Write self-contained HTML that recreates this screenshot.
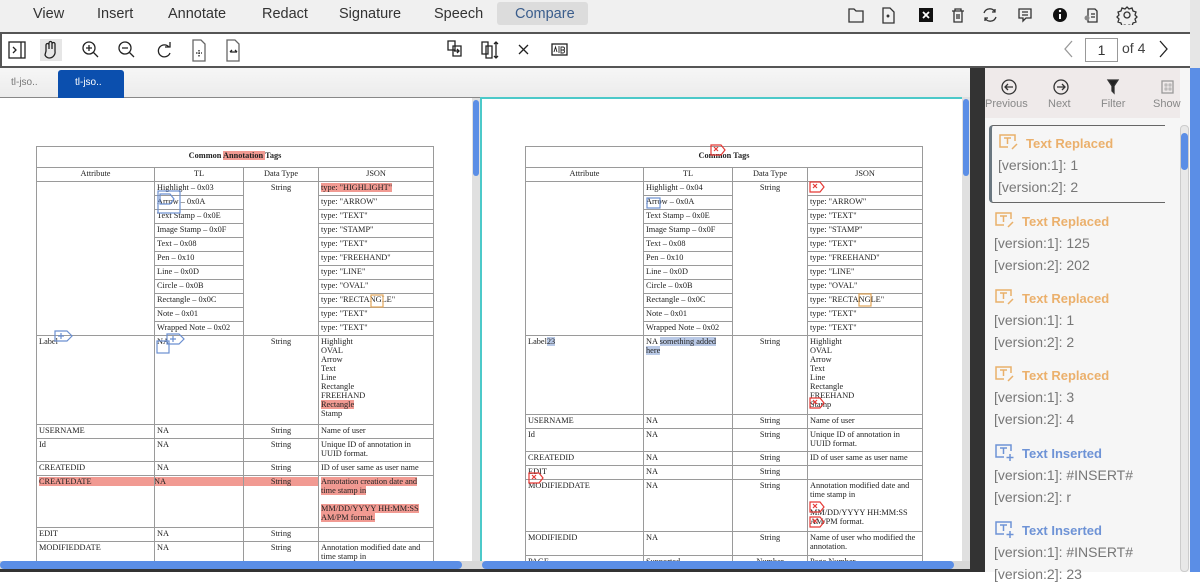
<!DOCTYPE html>
<html><head><meta charset="utf-8">
<style>
*{box-sizing:border-box;margin:0;padding:0}
body{width:1200px;height:572px;overflow:hidden;background:#fff;font-family:"Liberation Sans",sans-serif;position:relative}
.abs{position:absolute}
#menu{left:0;top:0;width:1200px;height:32px;background:#f0f0f0}
#menu span{position:absolute;top:6px;font-size:14.5px;color:#333}
#tb{left:0;top:32px;width:1200px;height:36px;background:#fff;border:2px solid #555}
#tabs{left:0;top:68px;width:985px;height:30px;background:linear-gradient(#f6f6f6,#ececec);border-bottom:1px solid #888}
table{border-collapse:collapse;font-family:"Liberation Serif",serif;font-size:8.3px;color:#222;position:absolute;table-layout:fixed}
td{border:1px solid #9a9a9a;vertical-align:top;padding:1px 2px;line-height:9px;white-space:nowrap;overflow:hidden}
td.c{text-align:center}
.hl{background:#f19a92}
.bl{background:#b9c9e6}
.item{position:absolute;left:994px}
.item .t{font-size:13px;font-weight:bold;margin-left:28px}
.item .v{font-size:14px;color:#777;line-height:22px;margin-top:3px}
.ico{position:absolute;left:0;top:-3px;width:20px;height:18px}
</style></head><body>

<div id="menu" class="abs">
<span style="left:33px">View</span><span style="left:97px">Insert</span><span style="left:168px">Annotate</span><span style="left:262px">Redact</span><span style="left:339px">Signature</span><span style="left:434px">Speech</span>
<div class="abs" style="left:497px;top:2px;width:91px;height:23px;background:#dcdcdc;border-radius:3px"></div>
<span style="left:515px;color:#3a5d8c">Compare</span>
<svg class="abs" style="left:846px;top:5px" width="300" height="20" fill="none" stroke="#333" stroke-width="1.3">
<path d="M3 4h5l2 2h7v11H3z"/>
<path d="M37 3h7l4 4v11H37z"/><circle cx="42" cy="11" r="0.8" fill="#333"/>
<rect x="73" y="3" width="14" height="14" fill="#111" stroke="none"/><path d="M77 7l6 6M83 7l-6 6" stroke="#fff" stroke-width="1.8"/>
<path d="M106 6h12M109 6V4h6v2M108 6v11h8V6M111 9v5M113 9v5"/>
<path d="M138 8a6 6 0 0 1 11-1M150 12a6 6 0 0 1-11 1M149 4v3h-3M139 16v-3h3"/>
<path d="M173 4h12v9h-5l-3 3v-3h-4z M176 7h6M176 10h6"/>
<circle cx="214" cy="10" r="7" fill="#111" stroke="none"/><path d="M214 9v5" stroke="#fff" stroke-width="2"/><circle cx="214" cy="6" r="1.2" fill="#fff" stroke="none"/>
<path d="M242 4h7l2 2v11h-9z M245 9h4M245 12h4"/><circle cx="241" cy="13" r="2.5" fill="#888" stroke="none"/>
<circle cx="281" cy="10" r="3"/><path d="M281 2l2 2 3-1 1 3 3 1-1 3 2 2-2 2 1 3-3 1-1 3-3-1-2 2-2-2-3 1-1-3-3-1 1-3-2-2 2-2-1-3 3-1 1-3 3 1z"/>
</svg>
</div>

<div id="tb" class="abs">
<svg class="abs" style="left:3px;top:5px" width="600" height="24" fill="none" stroke="#222" stroke-width="1.3">
<rect x="4" y="3" width="16" height="16"/><path d="M16 3v16M8 8l3 3-3 3"/>
<rect x="35" y="0" width="22" height="22" fill="#e6e6e6" stroke="none"/>
<path d="M41 12V6a1.5 1.5 0 0 1 3 0v4V4a1.5 1.5 0 0 1 3 0v6V5a1.5 1.5 0 0 1 3 0v7a6 6 0 0 1-6 7 5 5 0 0 1-4-3z"/>
<circle cx="84" cy="9" r="6"/><path d="M88 13l5 5M81 9h6M84 6v6"/>
<circle cx="120" cy="9" r="6"/><path d="M124 13l5 5M117 9h6"/>
<path d="M164 8a6 6 0 1 0 1 6M165 3v5h-5"/>
<path d="M188 1h8l4 4v17h-12z" stroke="#666"/><path d="M194 11v7M191 14h6" stroke-dasharray="1.5 1"/>
<path d="M222 1h8l4 4v17h-12z" stroke="#666"/><path d="M225 13h7M225 13l2-2M232 13l-2-2"/>
<path d="M443 2h7v9h-7zM448 7h8v10h-8zM449 12h5M452 10l2 2-2 2"/>
<path d="M477 3h6v12h-6zM481 7h6v12h-6zM491 3v16M489 5l2-2 2 2M489 17l2 2 2-2"/>
<path d="M514 6l9 9M523 6l-9 9"/>
<rect x="547" y="5" width="15" height="11"/><path d="M554 7v7M549 13l1.5-5 1.5 5M556 8h2a1 1 0 0 1 0 3h-2zM556 11h2a1 1 0 0 1 0 3h-2z" stroke-width="0.9"/>
</svg>
<svg class="abs" style="left:1058px;top:4px" width="130" height="24" fill="none" stroke="#999" stroke-width="1.3"><path d="M12 3l-7 8 7 8"/><path d="M100 3l7 8-7 8" stroke="#222"/></svg>
<div class="abs" style="left:1083px;top:4px;width:33px;height:24px;border:1px solid #999;font-size:14px;text-align:center;line-height:22px;color:#333">1</div>
<span class="abs" style="left:1120px;top:6px;font-size:14px;color:#444">of 4</span>
</div>

<div id="tabs" class="abs">
<span class="abs" style="left:11px;top:9px;font-size:10px;color:#777">tl-jso..</span>
<div class="abs" style="left:58px;top:2px;width:66px;height:28px;background:#0b4fae;border-radius:3px 3px 0 0;color:#fff;font-size:10px;padding:7px 0 0 17px">tl-jso..</div>
</div>

<div class="abs" style="left:0;top:98px;width:472px;height:463px;background:#fff;overflow:hidden">
<table style="left:36px;top:48px;width:397px">
<colgroup><col style="width:118px"><col style="width:89px"><col style="width:75px"><col style="width:115px"></colgroup>
<tr style="height:21px"><td colspan="4" class="c" style="font-weight:bold;padding-top:4px">Common <span class="hl">Annotation </span>Tags</td></tr>
<tr style="height:14px"><td class="c">Attribute</td><td class="c">TL</td><td class="c">Data Type</td><td class="c">JSON</td></tr>
<tr style="height:14px"><td rowspan="11"></td><td>Highlight – 0x03</td><td rowspan="11" class="c">String</td><td><span class="hl">type: "HIGHLIGHT"</span></td></tr>
<tr style="height:14px"><td>Arrow – 0x0A</td><td>type: "ARROW"</td></tr>
<tr style="height:14px"><td>Text Stamp – 0x0E</td><td>type: "TEXT"</td></tr>
<tr style="height:14px"><td>Image Stamp – 0x0F</td><td>type: "STAMP"</td></tr>
<tr style="height:14px"><td>Text – 0x08</td><td>type: "TEXT"</td></tr>
<tr style="height:14px"><td>Pen – 0x10</td><td>type: "FREEHAND"</td></tr>
<tr style="height:14px"><td>Line – 0x0D</td><td>type: "LINE"</td></tr>
<tr style="height:14px"><td>Circle – 0x0B</td><td>type: "OVAL"</td></tr>
<tr style="height:14px"><td>Rectangle – 0x0C</td><td>type: "RECTANGLE"</td></tr>
<tr style="height:14px"><td>Note – 0x01</td><td>type: "TEXT"</td></tr>
<tr style="height:14px"><td>Wrapped Note – 0x02</td><td>type: "TEXT"</td></tr>
<tr style="height:89px"><td>Label</td><td>NA</td><td class="c">String</td><td>Highlight<br>OVAL<br>Arrow<br>Text<br>Line<br>Rectangle<br>FREEHAND<br><span class="hl">Rectangle</span><br>Stamp</td></tr>
<tr style="height:14px"><td>USERNAME</td><td>NA</td><td class="c">String</td><td>Name of user</td></tr>
<tr style="height:23px"><td>Id</td><td>NA</td><td class="c">String</td><td>Unique ID of annotation in<br>UUID format.</td></tr>
<tr style="height:14px"><td>CREATEDID</td><td>NA</td><td class="c">String</td><td>ID of user same as user name</td></tr>
<tr style="height:52px"><td><span class="hl" style="display:block;margin-right:-3px">CREATEDATE</span></td><td><span class="hl" style="display:block;margin:0 -3px">NA</span></td><td class="c"><span class="hl" style="display:block;margin:0 -3px">String</span></td><td><span class="hl">Annotation creation date and</span><br><span class="hl">time stamp in</span><br><br><span class="hl">MM/DD/YYYY HH:MM:SS</span><br><span class="hl">AM/PM format.</span></td></tr>
<tr style="height:14px"><td>EDIT</td><td>NA</td><td class="c">String</td><td></td></tr>
<tr style="height:30px"><td>MODIFIEDDATE</td><td>NA</td><td class="c">String</td><td>Annotation modified date and<br>time stamp in</td></tr>
</table>
<svg class="abs" style="left:0;top:0" width="472" height="463" fill="none" stroke-width="1.2">
<g stroke="#6b8fd0"><rect x="158" y="93" width="22" height="22"/><path d="M160 96h10l4 5-4 5h-10z"/>
<path d="M55 233h12l5 5-5 5H55z M61 235v6M58 238h6"/>
<path d="M167 236h12l5 5-5 5h-12z M173 238v6M170 241h6"/><rect x="157" y="243" width="12" height="12"/></g>
<rect x="371" y="197" width="12" height="12" stroke="#e3a75a"/>
</svg>
</div>
<div class="abs" style="left:472px;top:98px;width:8px;height:463px;background:#e0e0e0"></div>
<div class="abs" style="left:473px;top:100px;width:6px;height:76px;background:#5b8ee6;border-radius:3px"></div>

<div class="abs" style="left:480px;top:97px;width:490px;height:464px;background:#fff;border-left:2px solid #4cc9c9;border-top:2px solid #4cc9c9;overflow:hidden">
<table style="left:43px;top:47px;width:397px">
<colgroup><col style="width:118px"><col style="width:89px"><col style="width:75px"><col style="width:115px"></colgroup>
<tr style="height:21px"><td colspan="4" class="c" style="font-weight:bold;padding-top:4px">Common Tags</td></tr>
<tr style="height:14px"><td class="c">Attribute</td><td class="c">TL</td><td class="c">Data Type</td><td class="c">JSON</td></tr>
<tr style="height:14px"><td rowspan="11"></td><td>Highlight – 0x04</td><td rowspan="11" class="c">String</td><td></td></tr>
<tr style="height:14px"><td>Arrow – 0x0A</td><td>type: "ARROW"</td></tr>
<tr style="height:14px"><td>Text Stamp – 0x0E</td><td>type: "TEXT"</td></tr>
<tr style="height:14px"><td>Image Stamp – 0x0F</td><td>type: "STAMP"</td></tr>
<tr style="height:14px"><td>Text – 0x08</td><td>type: "TEXT"</td></tr>
<tr style="height:14px"><td>Pen – 0x10</td><td>type: "FREEHAND"</td></tr>
<tr style="height:14px"><td>Line – 0x0D</td><td>type: "LINE"</td></tr>
<tr style="height:14px"><td>Circle – 0x0B</td><td>type: "OVAL"</td></tr>
<tr style="height:14px"><td>Rectangle – 0x0C</td><td>type: "RECTANGLE"</td></tr>
<tr style="height:14px"><td>Note – 0x01</td><td>type: "TEXT"</td></tr>
<tr style="height:14px"><td>Wrapped Note – 0x02</td><td>type: "TEXT"</td></tr>
<tr style="height:79px"><td>Label<span class="bl">23 </span></td><td>NA <span class="bl">something added</span><br><span class="bl">here </span></td><td class="c">String</td><td>Highlight<br>OVAL<br>Arrow<br>Text<br>Line<br>Rectangle<br>FREEHAND<br>Stamp</td></tr>
<tr style="height:14px"><td>USERNAME</td><td>NA</td><td class="c">String</td><td>Name of user</td></tr>
<tr style="height:23px"><td>Id</td><td>NA</td><td class="c">String</td><td>Unique ID of annotation in<br>UUID format.</td></tr>
<tr style="height:14px"><td>CREATEDID</td><td>NA</td><td class="c">String</td><td>ID of user same as user name</td></tr>
<tr style="height:14px"><td>EDIT</td><td>NA</td><td class="c">String</td><td></td></tr>
<tr style="height:52px"><td>MODIFIEDDATE</td><td>NA</td><td class="c">String</td><td>Annotation modified date and<br>time stamp in<br><br>MM/DD/YYYY HH:MM:SS<br>AM/PM format.</td></tr>
<tr style="height:24px"><td>MODIFIEDID</td><td>NA</td><td class="c">String</td><td>Name of user who modified the<br>annotation.</td></tr>
<tr style="height:14px"><td>PAGE</td><td>Supported</td><td class="c">Number</td><td>Page Number</td></tr>
</table>
<svg class="abs" style="left:-2px;top:-2px" width="490" height="466" fill="none" stroke-width="1.2">
<g stroke="#e53935"><path d="M231 48h10l4 5-4 5h-10z M234 50l4 4M238 50l-4 4"/>
<path d="M330 85h10l4 5-4 5h-10z M333 87l4 4M337 87l-4 4"/>
<path d="M330 301h10l4 5-4 5h-10z M333 303l4 4M337 303l-4 4"/>
<path d="M49 376h10l4 5-4 5H49z M52 378l4 4M56 378l-4 4"/>
<path d="M330 405h10l4 5-4 5h-10z M333 407l4 4M337 407l-4 4"/>
<path d="M330 420h10l4 5-4 5h-10z M333 422l4 4M337 422l-4 4"/></g>
<rect x="379" y="197" width="12" height="12" stroke="#e3a75a"/>
<rect x="167" y="101" width="13" height="10" stroke="#6b8fd0"/>
</svg>
</div>
<div class="abs" style="left:962px;top:97px;width:8px;height:464px;background:#e0e0e0"></div>
<div class="abs" style="left:963px;top:99px;width:6px;height:77px;background:#5b8ee6;border-radius:3px"></div>

<div class="abs" style="left:0;top:561px;width:970px;height:11px;background:#d8d8d8"></div>
<div class="abs" style="left:0;top:561px;width:462px;height:8px;background:#5b8ee6;border-radius:4px"></div>
<div class="abs" style="left:482px;top:561px;width:472px;height:8px;background:#5b8ee6;border-radius:4px"></div>
<div class="abs" style="left:0;top:569px;width:970px;height:3px;background:#333"></div>

<div class="abs" style="left:970px;top:68px;width:15px;height:504px;background:#333"></div>

<div class="abs" style="left:985px;top:68px;width:205px;height:504px;background:#f6f6f6"></div>
<div class="abs" style="left:985px;top:68px;width:195px;height:50px;background:#efeaea"></div>
<svg class="abs" style="left:985px;top:76px" width="200" height="20" fill="none" stroke="#333" stroke-width="1.3">
<circle cx="24" cy="11" r="7"/><path d="M28 11h-8M23 8l-3 3 3 3"/>
<circle cx="76" cy="11" r="7"/><path d="M72 11h8M77 8l3 3-3 3"/>
<path d="M123 4h10l-4 6v7l-2-2v-5z" fill="#222"/>
<rect x="177" y="5" width="11" height="12" stroke="#999"/><path d="M180 8h2v2h-2zM184 8h2v2h-2zM180 12h2v2h-2zM184 12h2v2h-2z" stroke="#999" stroke-width="0.7"/>
</svg>
<div class="abs" style="left:985px;top:98px;font-size:11px;color:#888;width:200px">
<span class="abs" style="left:0">Previous</span><span class="abs" style="left:63px">Next</span><span class="abs" style="left:116px">Filter</span><span class="abs" style="left:168px">Show</span></div>

<div class="abs" style="left:989px;top:125px;width:176px;height:78px;border:1px solid #666;border-left:3px solid #6a7780;border-right:none;border-radius:4px 0 0 4px"></div>

<div class="item" style="left:998px;top:136px"><svg class="ico" viewBox="0 0 20 18" fill="none" stroke="#e9b06a" stroke-width="1.5"><path d="M10 14H2V2h15v6M6 5h7M9.5 5v6M14 16l5-5"/></svg><div class="t" style="color:#ebb06c">Text Replaced</div><div class="v">[version:1]: 1<br>[version:2]: 2</div></div>
<div class="item" style="top:214px"><svg class="ico" viewBox="0 0 20 18" fill="none" stroke="#e9b06a" stroke-width="1.5"><path d="M10 14H2V2h15v6M6 5h7M9.5 5v6M14 16l5-5"/></svg><div class="t" style="color:#ebb06c">Text Replaced</div><div class="v">[version:1]: 125<br>[version:2]: 202</div></div>
<div class="item" style="top:291px"><svg class="ico" viewBox="0 0 20 18" fill="none" stroke="#e9b06a" stroke-width="1.5"><path d="M10 14H2V2h15v6M6 5h7M9.5 5v6M14 16l5-5"/></svg><div class="t" style="color:#ebb06c">Text Replaced</div><div class="v">[version:1]: 1<br>[version:2]: 2</div></div>
<div class="item" style="top:368px"><svg class="ico" viewBox="0 0 20 18" fill="none" stroke="#e9b06a" stroke-width="1.5"><path d="M10 14H2V2h15v6M6 5h7M9.5 5v6M14 16l5-5"/></svg><div class="t" style="color:#ebb06c">Text Replaced</div><div class="v">[version:1]: 3<br>[version:2]: 4</div></div>
<div class="item" style="top:446px"><svg class="ico" viewBox="0 0 20 18" fill="none" stroke="#6e93d6" stroke-width="1.5"><path d="M10 14H2V2h15v6M6 5h7M9.5 5v6M16 11v7M12.5 14.5h7"/></svg><div class="t" style="color:#6e93d6">Text Inserted</div><div class="v">[version:1]: #INSERT#<br>[version:2]: r</div></div>
<div class="item" style="top:523px"><svg class="ico" viewBox="0 0 20 18" fill="none" stroke="#6e93d6" stroke-width="1.5"><path d="M10 14H2V2h15v6M6 5h7M9.5 5v6M16 11v7M12.5 14.5h7"/></svg><div class="t" style="color:#6e93d6">Text Inserted</div><div class="v">[version:1]: #INSERT#<br>[version:2]: 23</div></div>

<div class="abs" style="left:1180px;top:125px;width:9px;height:447px;background:#e8e8e8;border:1px solid #ccc;border-radius:4px"></div>
<div class="abs" style="left:1181px;top:133px;width:7px;height:37px;background:#5b8ee6;border-radius:4px"></div>
<div class="abs" style="left:1190px;top:68px;width:10px;height:504px;background:#5b8ee6"></div>
<div class="abs" style="left:1190px;top:0;width:10px;height:68px;background:#e6e6e6"></div>
</body></html>
